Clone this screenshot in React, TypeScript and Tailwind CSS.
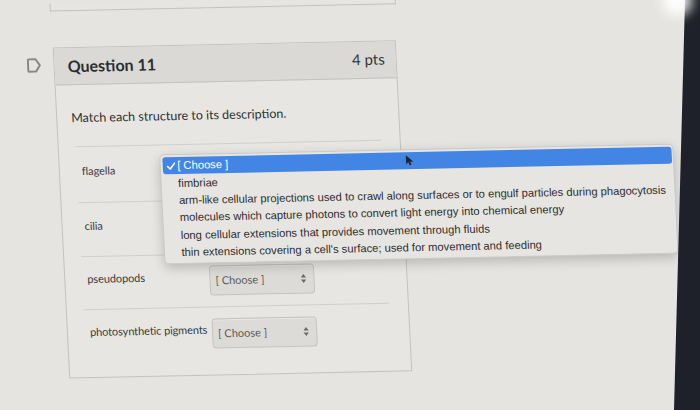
import React from "react";

const lato = { fontFamily: "Lato, 'Open Sans', sans-serif" };

function Select() {
  return (
    <div className="flex h-[30px] w-[105px] shrink-0 items-center justify-between rounded-[4px] border border-[#c4c3bf] bg-[#dcdbd7] pl-[5px] pr-[7px] text-[11px] text-[#5a5a5a] shadow-[inset_0_1px_0_rgba(255,255,255,0.4)]">
      <span>[ Choose ]</span>
      <svg width="6" height="10" viewBox="0 0 6 10">
        <path d="M3 0.5 L5.6 4 H0.4 Z M3 9.5 L5.6 6 H0.4 Z" fill="#6a6a6a" />
      </svg>
    </div>
  );
}

const rows = [
  { label: "flagella", h: "h-[56px]" },
  { label: "cilia", h: "h-[54px]" },
  { label: "pseudopods", h: "h-[53px]" },
  { label: "photosynthetic pigments", h: "h-[53px]" },
];

const options = [
  "fimbriae",
  "arm-like cellular projections used to crawl along surfaces or to engulf particles during phagocytosis",
  "molecules which capture photons to convert light energy into chemical energy",
  "long cellular extensions that provides movement through fluids",
  "thin extensions covering a cell's surface; used for movement and feeding",
];

export default function App() {
  return (
    <div className="relative flex h-[410px] w-[700px] overflow-hidden bg-[#e5e4e0]" style={lato}>
      <div className="relative h-[410px] w-[674px] shrink-0 origin-[230px_210px] [transform:matrix(1,-0.021,0.05,1,0,0)]">
        {/* previous question stub */}
        <div className="ml-[60px] h-[8px] w-[346px] border-x border-b border-[#c3c2be] bg-[#e6e5e1]" />

        {/* question card */}
        <div className="mt-[35.5px] flex pl-[34px]">
          <div className="w-[27px] shrink-0 pt-[10.5px]">
            <svg width="15" height="15" viewBox="0 0 15 15">
              <path
                d="M1.5 2.5 Q1.5 1.3 2.7 1.3 H9.2 L13.3 7.5 L9.2 13.7 H2.7 Q1.5 13.7 1.5 12.5 Z"
                fill="none"
                stroke="#858583"
                strokeWidth="1.9"
                strokeLinejoin="round"
              />
            </svg>
          </div>
          <div className="w-[343px] border border-[#c3c2be] bg-[#e7e6e2]">
            <div className="flex h-[37px] items-center justify-between border-b border-[#c3c2be] bg-[#dad9d5] pl-[13px] pr-[11px]">
              <span className="text-[16px] font-bold text-[#2a2d31]">Question 11</span>
              <span className="text-[15px] text-[#33363a]">4 pts</span>
            </div>
            <div className="pb-[15px] pt-[25px]">
              <p className="h-[16px] pl-[14px] text-[12.5px] leading-[16px] text-[#2f3134]">
                Match each structure to its description.
              </p>
              <div className="ml-[17px] mr-[19px] mt-[20.5px]">
                {rows.map((r) => (
                  <div key={r.label} className={`flex items-center border-t border-[#d0cfcb] pl-[5px] ${r.h}`}>
                    <div className="w-[122px] shrink-0 whitespace-nowrap pb-[7px] text-[11px] tracking-[-0.1px] text-[#3a3b3d]">
                      {r.label}
                    </div>
                    <Select />
                  </div>
                ))}
              </div>
            </div>
          </div>
        </div>

        {/* open native menu */}
        <div
          className="absolute left-[162px] top-[153px] w-[514px] rounded-[5px] border border-[#cbcac6] bg-[#e6e5e1] px-[1.5px] py-[2px] text-[11.2px] text-[#2e2e2e] shadow-[0_4px_12px_rgba(0,0,0,0.2)]"
          style={{ fontFamily: "'Liberation Sans', Arial, sans-serif" }}
        >
          <div className="relative flex h-[17.4px] items-center rounded-[3px] bg-[#4285e4] pl-[4px] text-white">
            <span className="flex w-[11px] shrink-0 items-center">
              <svg width="9" height="8" viewBox="0 0 9 8">
                <polyline points="1,4.3 3.4,6.8 8,1" fill="none" stroke="#fff" strokeWidth="1.6" strokeLinecap="round" strokeLinejoin="round" />
              </svg>
            </span>
            <span>[ Choose ]</span>
            <svg className="absolute left-[243px] top-[3px]" width="8" height="11" viewBox="0 0 8 11">
              <path d="M0.5 0.5 L0.5 8.5 L2.6 6.6 L4 9.8 L5.2 9.3 L3.9 6.2 L6.8 6.2 Z" fill="#1f2430" stroke="#1f2430" strokeWidth="0.6" strokeLinejoin="round" />
            </svg>
          </div>
          {options.map((o) => (
            <div key={o} className="flex h-[17.4px] items-center whitespace-nowrap pl-[15px]">
              {o}
            </div>
          ))}
        </div>
      </div>

      {/* monitor edge */}
      <div className="relative h-[410px] w-[26px] shrink-0 bg-[#1e2129] [clip-path:polygon(11px_0,26px_0,26px_410px,0_410px)]" />
      <div className="absolute left-[662px] top-[-14px] h-[30px] w-[30px] rounded-full bg-white/90 blur-[6px]" />
    </div>
  );
}
